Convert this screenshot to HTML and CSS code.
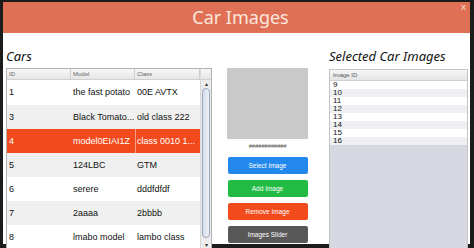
FILE: index.html
```html
<!DOCTYPE html>
<html lang="en">
<head>
    <meta charset="UTF-8">
    <title>Car Images</title>
    <link rel="stylesheet" href="styles.css">
</head>
<body>
    <div class="window">
        <div class="titlebar">
            <span class="title">Car Images</span>
            <span class="close">X</span>
        </div>
        <div class="content">
            <!-- cars list -->
            <div class="panel">
                <div class="label">Cars</div>
                <div class="grid">
                    <div class="grid-body">
                        <div class="grid-head">
                            <span>ID</span><span>Model</span><span>Class</span>
                        </div>
                        <div class="row"><span>1</span><span>the fast potato</span><span>00E AVTX</span></div>
                        <div class="row alt"><span>3</span><span>Black Tomato...</span><span>old class 222</span></div>
                        <div class="row sel"><span>4</span><span>model0EIAI1Z</span><span>class 0010 1...</span></div>
                        <div class="row alt"><span>5</span><span>124LBC</span><span>GTM</span></div>
                        <div class="row"><span>6</span><span>serere</span><span>dddfdfdf</span></div>
                        <div class="row alt"><span>7</span><span>2aaaa</span><span>2bbbb</span></div>
                        <div class="row"><span>8</span><span>lmabo model</span><span>lambo class</span></div>
                    </div>
                    <div class="scrollbar">
                        <div class="corner"></div>
                        <div class="arrow">&#9652;</div>
                        <div class="thumb"></div>
                        <div class="arrow">&#9662;</div>
                    </div>
                </div>
            </div>

            <!-- image + actions -->
            <div class="middle">
                <div class="preview"></div>
                <div class="caption">############</div>
                <button class="btn blue">Select Image</button>
                <button class="btn green">Add Image</button>
                <button class="btn red">Remove Image</button>
                <button class="btn dark">Images Slider</button>
            </div>

            <!-- selected images -->
            <div class="panel">
                <div class="label">Selected Car Images</div>
                <div class="list">
                    <div class="list-head">Image ID</div>
                    <div class="item">9</div>
                    <div class="item alt">10</div>
                    <div class="item">11</div>
                    <div class="item alt">12</div>
                    <div class="item">13</div>
                    <div class="item alt">14</div>
                    <div class="item">15</div>
                    <div class="item alt">16</div>
                </div>
            </div>
        </div>
    </div>
</body>
</html>
```

FILE: styles.css
```css
* {
    padding: 0;
    margin: 0;
    box-sizing: border-box;
}

body {
    background-color: #1c1c1c;
    font-family: "Liberation Sans", Arial, sans-serif;
    width: 474px;
    height: 248px;
    overflow: hidden;
}

.window {
    margin: 2px 4px 0 3px;
    height: 242px;
    background-color: #fff;
    display: flex;
    flex-direction: column;
}

.titlebar {
    position: relative;
    height: 31px;
    background-color: #e07055;
    display: flex;
    align-items: center;
    justify-content: center;
}

.title {
    font-family: "Noto Sans", sans-serif;
    font-size: 18px;
    color: #fbe7df;
    margin-top: -1px;
    margin-left: 8px;
}

.close {
    position: absolute;
    top: 1px;
    right: 4px;
    font-size: 8px;
    color: #fbe7df;
}

.content {
    flex: 1;
    display: grid;
    grid-template-columns: 206px 117px 139px;
    padding: 0 2px 0 3px;
    min-height: 0;
}

.panel {
    display: flex;
    flex-direction: column;
    min-height: 0;
}

.label {
    font-family: "Noto Sans", sans-serif;
    font-style: italic;
    font-size: 13px;
    height: 35px;
    padding-top: 14px;
    color: #111;
}

/* cars grid */
.grid {
    flex: 1;
    display: flex;
    border: 1px solid #b4b4b4;
    border-bottom: none;
    overflow: hidden;
}

.grid-body {
    flex: 1;
}

.grid-head,
.row {
    display: grid;
    grid-template-columns: 64px 64px 1fr;
}

.grid-head {
    height: 11px;
    background: linear-gradient(#f7f7f7, #e6e6e6);
    border-bottom: 1px solid #d0d0d0;
    font-size: 6px;
    color: #666;
    line-height: 10px;
}

.grid-head span {
    padding-left: 2px;
    border-right: 1px solid #cfcfcf;
}

.row {
    height: 24px;
    font-size: 9px;
    line-height: 24px;
    color: #111;
    background-color: #fff;
    white-space: nowrap;
    overflow: hidden;
}

.row:nth-child(2) {
    height: 25px;
    line-height: 25px;
}

.row span {
    padding-left: 2px;
}

.row.alt {
    background-color: #f0f0f0;
}

.row.sel {
    background-color: #f24a1c;
    color: #fff;
}

.row.sel span:last-child {
    border-left: 1px solid #f9a088;
    padding-left: 1px;
}

.scrollbar {
    width: 11px;
    background-color: #ececec;
    border-left: 1px solid #d8d8d8;
    display: flex;
    flex-direction: column;
}

.corner {
    height: 11px;
    background: linear-gradient(#f7f7f7, #e6e6e6);
    border-bottom: 1px solid #d0d0d0;
}

.arrow {
    height: 8px;
    font-size: 6px;
    line-height: 8px;
    text-align: center;
    color: #333;
}

.thumb {
    flex: 1;
    margin: 0 1px 3px 1px;
    border: 1px solid #9aa7bd;
    border-radius: 5px;
    background: linear-gradient(90deg, #d6dde8, #eef2f7);
}

/* middle column */
.middle {
    display: flex;
    flex-direction: column;
    align-items: center;
    padding-top: 35px;
    padding-right: 6px;
}

.preview {
    width: 81px;
    height: 71px;
    background-color: #c9c9c9;
}

.caption {
    font-size: 6px;
    color: #555;
    height: 18px;
    line-height: 15px;
    letter-spacing: -0.2px;
}

.btn {
    width: 80px;
    height: 17px;
    border: none;
    border-radius: 2px;
    color: #fff;
    font-family: "Liberation Sans", Arial, sans-serif;
    font-size: 6.5px;
    margin-bottom: 6px;
}

.btn.blue {
    background-color: #2288ee;
}

.btn.green {
    background-color: #22bb44;
}

.btn.red {
    background-color: #f24a1c;
}

.btn.dark {
    background-color: #585858;
}

/* selected images list */
.list {
    flex: 1;
    background-color: #d5d8e1;
    border: 1px solid #c4c4c4;
    border-bottom: none;
    margin-top: 1px;
}

.list-head {
    height: 11px;
    background: linear-gradient(#f7f7f7, #e4e4e4);
    border-bottom: 1px solid #cfcfcf;
    font-size: 6px;
    line-height: 10px;
    color: #555;
    padding-left: 3px;
}

.item {
    height: 8px;
    font-size: 8px;
    line-height: 8px;
    padding-left: 3px;
    background-color: #fff;
    color: #111;
}

.item.alt {
    background-color: #eef0f3;
}
```
